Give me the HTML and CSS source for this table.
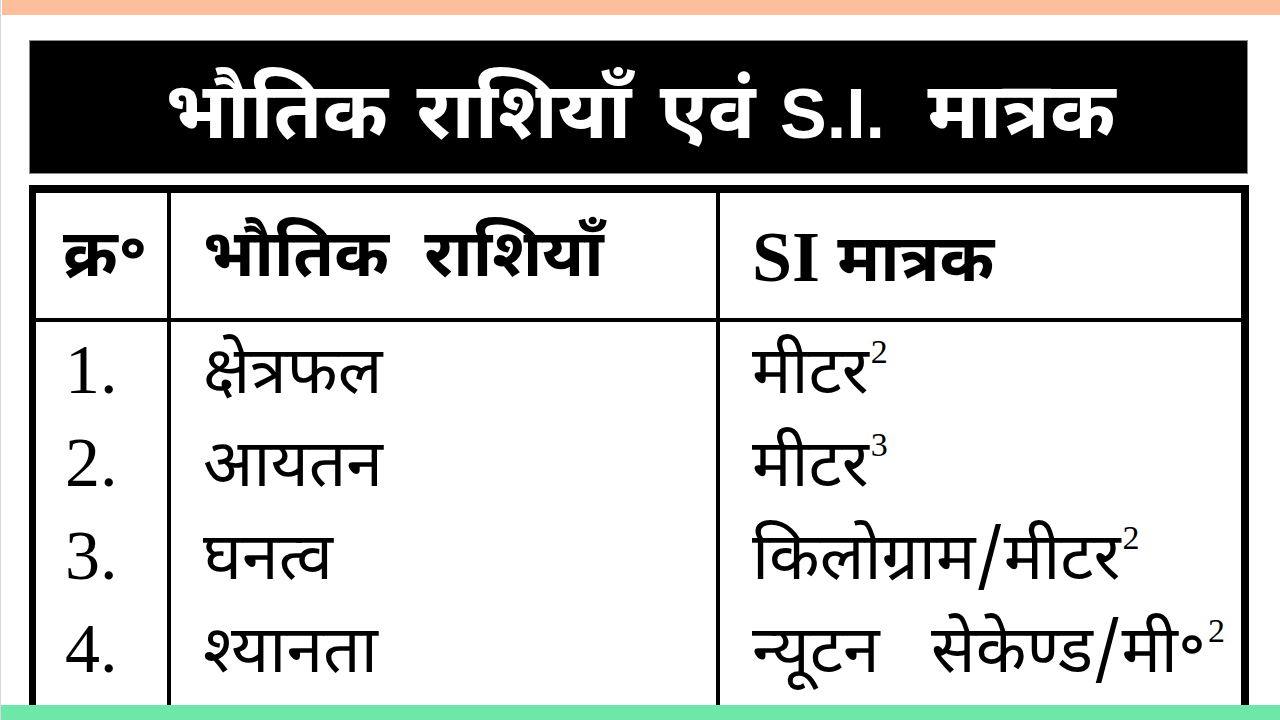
FILE: index.html
```html
<!DOCTYPE html>
<html lang="hi">
<head>
<meta charset="utf-8">
<title>भौतिक राशियाँ एवं S.I. मात्रक</title>
<link rel="stylesheet" href="styles.css">
</head>
<body>
<div class="top-stripe"></div>
<main class="page">
  <h1 class="title">भौतिक राशियाँ एवं <span class="latin">S.I.</span> मात्रक</h1>
  <table class="units">
    <colgroup><col class="w1"><col class="w2"><col class="w3"></colgroup>
    <thead>
      <tr>
        <th class="c1">क्र॰</th>
        <th class="c2">भौतिक राशियाँ</th>
        <th class="c3"><span class="serif">SI</span> मात्रक</th>
      </tr>
    </thead>
    <tbody>
      <tr class="first">
        <td class="c1"><span class="num">1.</span></td>
        <td class="c2">क्षेत्रफल</td>
        <td class="c3">मीटर<sup class="sup">2</sup></td>
      </tr>
      <tr>
        <td class="c1"><span class="num">2.</span></td>
        <td class="c2">आयतन</td>
        <td class="c3">मीटर<sup class="sup">3</sup></td>
      </tr>
      <tr>
        <td class="c1"><span class="num">3.</span></td>
        <td class="c2">घनत्व</td>
        <td class="c3">किलोग्राम/मीटर<sup class="sup">2</sup></td>
      </tr>
      <tr>
        <td class="c1"><span class="num">4.</span></td>
        <td class="c2">श्यानता</td>
        <td class="c3">न्यूटन&nbsp;&nbsp;&nbsp;सेकेण्ड/मी॰<sup class="sup">2</sup></td>
      </tr>
      <tr>
        <td class="c1"><span class="num">5.</span></td>
        <td class="c2">पृष्ठ तनाव</td>
        <td class="c3">किलोग्राम/सेकेण्ड<sup class="sup">2</sup></td>
      </tr>
    </tbody>
  </table>
</main>
<div class="bottom-stripe"></div>
</body>
</html>
```
FILE: styles.css
```css
html, body {
  margin: 0;
  padding: 0;
}
body {
  width: 1280px;
  height: 720px;
  overflow: hidden;
  background: #ffffff;
  position: relative;
  font-family: "Noto Sans Devanagari", "Lohit Devanagari", "Noto Sans", sans-serif;
  color: #000;
  border-left: 1px solid #d8d8d8;
  box-sizing: border-box;
}
.top-stripe {
  height: 15px;
  margin-left: 1px;
  background: #fdbe9e;
}
.page {
  padding: 25px 0 0 28px;
}
.title {
  margin: 0;
  width: 1219px;
  height: 134px;
  box-sizing: border-box;
  background: #000;
  border: 1px solid #8a8a8a;
  color: #fff;
  font-size: 79px;
  font-weight: 700;
  text-align: center;
  padding-top: 13px;
  line-height: 120px;
  word-spacing: 8px;
  white-space: nowrap;
  padding-left: 4px;
}
.latin {
  font-family: "Liberation Sans", Arial, sans-serif;
  font-weight: 700;
  font-size: 70px;
  margin-left: -4px;
  margin-right: 14px;
}
.units {
  margin-top: 11px;
  width: 1220px;
  box-sizing: border-box;
  table-layout: fixed;
  border-collapse: separate;
  border-spacing: 0;
  border-style: solid;
  border-color: #000;
  border-width: 8px 8px 0 7px;
}
.w1 { width: 135px; }
.w2 { width: 549px; }
th, td {
  padding: 0;
  text-align: left;
  white-space: nowrap;
}
.c1, .c2 {
  border-right: 4px solid #000;
}
th {
  height: 117px;
  border-bottom: 4px solid #000;
  font-size: 66px;
  font-weight: 700;
  vertical-align: middle;
  line-height: 1;
  padding-top: 8px;
}
th.c1 { padding-left: 27px; }
th.c2 { padding-left: 32px; word-spacing: 18px; }
th.c3 { padding-left: 32px; }
.serif {
  font-family: "Liberation Serif", "Times New Roman", serif;
  font-weight: 700;
  font-size: 72px;
}
td {
  height: 93px;
  font-size: 66px;
  line-height: 93px;
  vertical-align: baseline;
}
tr.first td {
  padding-top: 9px;
}
td.c1 { padding-left: 29px; }
td.c2 { padding-left: 32px; }
td.c3 { padding-left: 32px; }
.num {
  font-family: "Liberation Serif", "Times New Roman", serif;
  font-size: 70px;
  line-height: 0;
}
.sup {
  font-family: "Liberation Serif", "Times New Roman", serif;
  font-size: 34px;
  vertical-align: 30px;
  line-height: 0;
  margin-left: 2px;
}
.bottom-stripe {
  position: absolute;
  left: 0;
  right: 0;
  bottom: 0;
  height: 15px;
  background: #6ee7a8;
}
```
